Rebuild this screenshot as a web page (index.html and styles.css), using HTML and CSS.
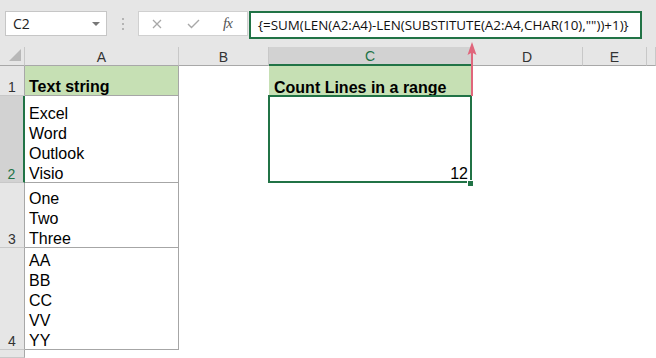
FILE: index.html
```html
<!DOCTYPE html>
<html>
<head>
<meta charset="utf-8">
<link rel="stylesheet" href="styles.css">
</head>
<body>
<div class="app">
  <div class="toolbar">
    <div class="namebox">
      <span class="nb-text">C2</span>
      <span class="nb-caret"></span>
    </div>
    <div class="grip"><i></i><i></i><i></i></div>
    <div class="fbuttons">
      <svg class="ic-x" width="10" height="10" viewBox="0 0 10 10"><path d="M1 1L9 9M9 1L1 9" stroke="#a8a8a8" stroke-width="1.3" fill="none"/></svg>
      <svg class="ic-ok" width="13" height="10" viewBox="0 0 13 10"><path d="M1 5L4.5 8.5L12 1" stroke="#a8a8a8" stroke-width="1.4" fill="none"/></svg>
      <span class="ic-fx">fx</span>
    </div>
    <div class="formula">{=SUM(LEN(A2:A4)-LEN(SUBSTITUTE(A2:A4,CHAR(10),""))+1)}</div>
  </div>

  <div class="sheet">
    <div class="corner"><span class="tri"></span></div>
    <div class="ch">A</div>
    <div class="ch">B</div>
    <div class="ch sel">C</div>
    <div class="ch">D</div>
    <div class="ch">E</div>
    <div class="ch"></div>

    <div class="rh">1</div>
    <div class="cell a hdr"><span>Text string</span></div>
    <div class="cell"></div>
    <div class="cell c1 hdr"><span>Count Lines in a range</span></div>
    <div class="cell"></div>
    <div class="cell"></div>
    <div class="cell"></div>

    <div class="rh rsel">2</div>
    <div class="cell a"><span>Excel</span><span>Word</span><span>Outlook</span><span>Visio</span></div>
    <div class="cell"></div>
    <div class="cell c2"><span class="num">12</span><span class="handle"></span></div>
    <div class="cell"></div>
    <div class="cell"></div>
    <div class="cell"></div>

    <div class="rh">3</div>
    <div class="cell a"><span>One</span><span>Two</span><span>Three</span></div>
    <div class="cell"></div>
    <div class="cell"></div>
    <div class="cell"></div>
    <div class="cell"></div>
    <div class="cell"></div>

    <div class="rh">4</div>
    <div class="cell a"><span>AA</span><span>BB</span><span>CC</span><span>VV</span><span>YY</span></div>
    <div class="cell"></div>
    <div class="cell"></div>
    <div class="cell"></div>
    <div class="cell"></div>
    <div class="cell"></div>

    <div class="rh"></div>
    <div class="cell"></div>
    <div class="cell"></div>
    <div class="cell"></div>
    <div class="cell"></div>
    <div class="cell"></div>
    <div class="cell"></div>
  </div>

  <svg class="arrow" width="14" height="58" viewBox="0 0 14 58">
    <line x1="7" y1="10" x2="7" y2="56" stroke="#e0667c" stroke-width="2"/>
    <path d="M7 2L11.5 15L7 12.5L2.5 15Z" fill="#e0667c"/>
  </svg>
</div>
</body>
</html>
```

FILE: styles.css
```css
* { box-sizing: border-box; }
html, body { margin: 0; padding: 0; }
body {
  width: 656px;
  height: 358px;
  overflow: hidden;
  background: #ffffff;
  font-family: "Liberation Sans", Arial, sans-serif;
  color: #000;
}
.app { position: relative; width: 656px; height: 358px; }

.toolbar {
  height: 47px;
  background: #e6e6e6;
  display: flex;
  align-items: flex-start;
  padding-top: 11px;
}
.namebox {
  margin-left: 5px;
  width: 102px;
  height: 25px;
  background: #fff;
  border: 1px solid #c6c6c6;
  display: flex;
  align-items: center;
  justify-content: space-between;
  padding: 0 6px 0 7px;
}
.nb-text { font-family: "Open Sans", sans-serif; font-size: 14px; color: #222; }
.nb-caret {
  width: 0; height: 0;
  border-left: 4px solid transparent;
  border-right: 4px solid transparent;
  border-top: 4px solid #777;
}
.grip {
  width: 31px;
  height: 25px;
  display: flex;
  flex-direction: column;
  align-items: center;
  justify-content: center;
  gap: 3px;
}
.grip i { display: block; width: 2px; height: 2px; background: #b4b4b4; }
.fbuttons {
  width: 110px;
  height: 25px;
  background: #fff;
  border: 1px solid #d0d0d0;
  display: flex;
  align-items: center;
  padding-left: 13px;
}
.ic-x { margin-right: 25px; }
.ic-ok { margin-right: 23px; }
.ic-fx {
  font-family: "Liberation Serif", serif;
  font-style: italic;
  font-size: 15px;
  color: #555;
  letter-spacing: -1px;
}
.formula {
  margin-left: 1px;
  width: 393px;
  height: 28px;
  border: 2px solid #217346;
  background: #fff;
  font-family: "Open Sans", sans-serif;
  font-size: 13.4px;
  line-height: 24px;
  padding-left: 7px;
  color: #111;
  white-space: nowrap;
  overflow: hidden;
}

.sheet {
  display: grid;
  grid-template-columns: 25px 154px 90px 203px 111px 64px 9px;
  grid-template-rows: 19px 30px 87px 65px 102px 8px;
}
.corner {
  background: #e6e6e6;
  border-right: 1px solid #c8c8c8;
  border-bottom: 1px solid #a8a8a8;
  position: relative;
}
.tri {
  position: absolute;
  right: 3px;
  bottom: 4px;
  width: 12px;
  height: 12px;
  background: #b8b8b8;
  clip-path: polygon(100% 0, 100% 100%, 0 100%);
}
.ch {
  background: #e6e6e6;
  border-right: 1px solid #c8c8c8;
  border-bottom: 1px solid #a8a8a8;
  font-size: 14px;
  color: #333;
  display: flex;
  align-items: center;
  justify-content: center;
  padding-top: 1px;
}
.ch.sel {
  background: #d2d2d2;
  border-bottom: 2px solid #217346;
  color: #217346;
}
.rh {
  background: #e6e6e6;
  border-right: 1px solid #a8a8a8;
  border-bottom: 1px solid #c8c8c8;
  font-size: 14px;
  line-height: 16px;
  color: #333;
  display: flex;
  align-items: flex-end;
  justify-content: center;
  padding-bottom: 0;
}
.rh.rsel {
  background: #d2d2d2;
  border-right: 2px solid #217346;
  color: #217346;
}
.cell {
  display: flex;
  flex-direction: column;
  justify-content: flex-end;
  font-size: 16px;
  line-height: 20px;
  padding-left: 5px;
}
.cell > span:last-of-type { margin-bottom: -2px; }
.cell.a {
  border-right: 1px solid #a6a6a6;
  border-bottom: 1px solid #a6a6a6;
  padding-left: 4px;
}
.cell.hdr { font-weight: bold; background: #c6e0b4; }
.cell.c1 { padding-left: 5px; }
.c2 {
  position: relative;
  margin: -1px 0 0 -1px;
  border: 2px solid #217346;
  align-items: flex-end;
  padding-right: 2px;
}
.c2 .num { margin-bottom: -3px; }
.handle {
  position: absolute;
  right: -4px;
  bottom: -4px;
  width: 7px;
  height: 7px;
  background: #217346;
  border: 1px solid #fff;
}
.arrow {
  position: absolute;
  left: 465px;
  top: 40px;
}
```
